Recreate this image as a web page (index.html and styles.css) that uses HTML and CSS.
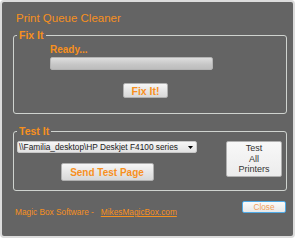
FILE: index.html
```html
<!DOCTYPE html>
<html lang="en">
<head>
    <meta charset="UTF-8">
    <title>Print Queue Cleaner</title>

    <link rel="stylesheet" href="styles.css">
</head>
<body>
<div class="window">
    <h1 class="title">Print Queue Cleaner</h1>

    <fieldset class="group">
        <legend>Fix It</legend>
        <div class="fix-body">
            <div class="status">Ready...</div>
            <div class="progress"></div>
            <button class="btn btn-fix">Fix It!</button>
        </div>
    </fieldset>

    <fieldset class="group group-test">
        <legend>Test It</legend>
        <div class="test-body">
            <div class="test-left">
                <div class="select">
                    <span>\\Familia_desktop\HP Deskjet F4100 series</span>
                    <svg width="5" height="3" viewBox="0 0 5 3"><path d="M0 0H5L2.5 3Z" fill="#000"/></svg>
                </div>
                <button class="btn btn-send">Send Test Page</button>
            </div>
            <button class="btn btn-all">Test<br>All<br>Printers</button>
        </div>
    </fieldset>

    <div class="footer">
        <div class="credit">Magic Box Software -&nbsp;&nbsp; <a href="#">MikesMagicBox.com</a></div>
        <button class="btn btn-close">Close</button>
    </div>
</div>
</body>
</html>
```

FILE: styles.css
```css
body {
    margin: 0;
    background: #fff;
    font-family: "Liberation Sans", Arial, sans-serif;
}

.window {
    box-sizing: border-box;
    width: 295px;
    height: 238px;
    border: 2px solid #dcdcdc;
    border-radius: 4px;
    background: #646464;
    padding: 9px 6px 0 11px;
}

.title {
    margin: 0 0 0 3px;
    font-size: 11.5px;
    line-height: 14px;
    font-weight: normal;
    color: #f7901e;
}

/* group boxes */

.group {
    box-sizing: border-box;
    width: 274px;
    min-width: 0;
    margin: 3px 0 0;
    padding: 0 3px;
    border: 1px solid #cfd3cf;
    border-radius: 3px;
}

.group legend {
    padding: 0 2px;
    font-size: 10.5px;
    line-height: 14px;
    font-weight: bold;
    color: #f7901e;
}

.group-test {
    margin-top: 10px;
}

.fix-body {
    display: flex;
    flex-direction: column;
    align-items: flex-start;
    padding: 2px 0 15px 33px;
}

.status {
    font-size: 10px;
    line-height: 12px;
    font-weight: bold;
    color: #f7901e;
}

.progress {
    box-sizing: border-box;
    width: 163px;
    height: 13px;
    margin-top: 1px;
    border: 1px solid #b4b4b4;
    border-radius: 2px;
    background: linear-gradient(#dedede, #c6c6c6 60%, #bdbdbd);
}

.test-body {
    display: flex;
    justify-content: space-between;
    align-items: flex-start;
    padding: 3px 1px 9px 0;
}

.test-left {
    width: 180px;
    display: flex;
    flex-direction: column;
    align-items: center;
}

.select {
    box-sizing: border-box;
    width: 180px;
    height: 12px;
    display: flex;
    align-items: center;
    justify-content: space-between;
    padding: 0 3px 0 1px;
    border: 1px solid #c8c8c8;
    border-radius: 2px;
    background: linear-gradient(#f6f6f6, #e2e2e2);
    font-size: 8.3px;
    line-height: 10px;
    color: #222;
    white-space: nowrap;
}

/* buttons */

.btn {
    box-sizing: border-box;
    padding: 0;
    border: 1px solid #b0b0b0;
    border-radius: 2px;
    background: linear-gradient(#f6f6f6, #e6e6e6 50%, #d8d8d8);
    font-family: inherit;
    color: #f7901e;
}

.btn-fix {
    width: 45px;
    height: 15px;
    margin: 13px 0 0 73px;
    font-size: 10.5px;
    font-weight: bold;
}

.btn-send {
    width: 93px;
    height: 18px;
    margin-top: 10px;
    font-size: 10px;
    font-weight: bold;
}

.btn-all {
    width: 56px;
    height: 36px;
    background: linear-gradient(#f8f8f8, #ececec);
    font-size: 9px;
    line-height: 10.5px;
    color: #333;
}

.footer {
    display: flex;
    justify-content: space-between;
    align-items: flex-start;
    width: 274px;
    margin-top: 10px;
    padding-left: 2px;
    box-sizing: border-box;
}

.credit {
    margin-top: 6px;
    font-size: 8.3px;
    line-height: 10px;
    color: #f7901e;
}

.credit a {
    color: #f7901e;
}

.btn-close {
    width: 44px;
    height: 12px;
    margin-right: 1px;
    border-color: #4faae6;
    background: linear-gradient(#fbfbfb, #e8e8e8);
    font-size: 8.3px;
    color: #f2a05a;
}
```
